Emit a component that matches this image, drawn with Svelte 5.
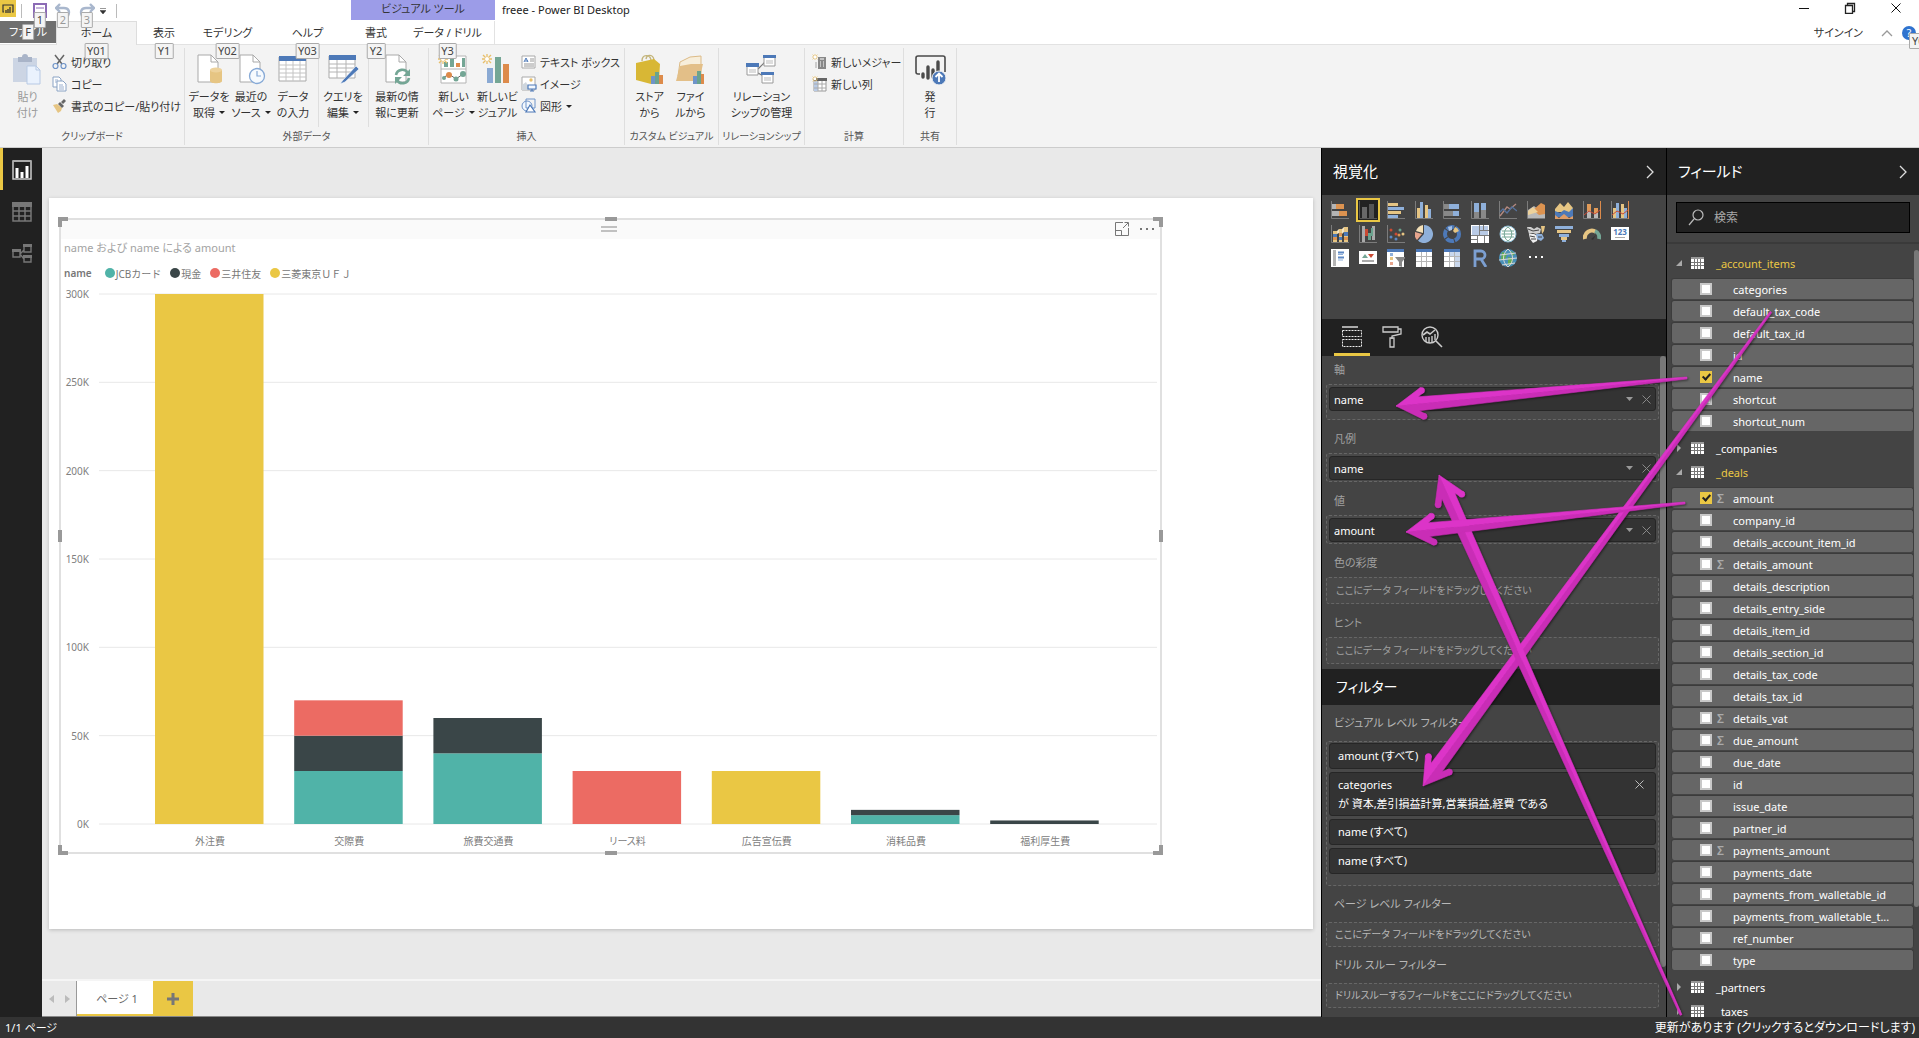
<script lang="ts">
  interface Segment {
    series: string;
    value: number;
  }

  interface Field {
    name: string;
    checked?: boolean;
    sum?: boolean;
  }

  const COLORS: Record<string, string> = {
    JCBカード: '#50b3a8',
    現金: '#3a4648',
    三井住友: '#ec6b63',
    三菱東京ＵＦＪ: '#eac744'
  };

  // Ribbon tabs and their key tips
  const tabs = [
    { label: 'ホーム', tip: 'Y01', active: true },
    { label: '表示', tip: 'Y1' },
    { label: 'モデリング', tip: 'Y02' },
    { label: 'ヘルプ', tip: 'Y03' },
    { label: '書式', tip: 'Y2', context: true },
    { label: 'データ / ドリル', tip: 'Y3', context: true }
  ];

  const doc = '<path d="M4 1h13l7 7v20H4z" fill="#fff" stroke="#a9a9a9"/><path d="M17 1v7h7" fill="none" stroke="#a9a9a9"/>';
  const spark = '<path d="M5 0v10M0 5h10M1 1l8 8M9 1l-8 8" stroke="#e8bf6a" stroke-width="1.3"/><circle cx="5" cy="5" r="2" fill="#fff"/>';

  const big: Record<string, string> = {
    paste: '<path d="M1 4h24v24H1z" fill="#ccd5e4"/><path d="M6 3h4a3 3 0 0 1 6 0h4v5H6z" fill="#a9b4c8"/><path d="M15 12h9l4 4v14H15z" fill="#eaf2fd" stroke="#b7c9e4"/><path d="M24 12v4h4" fill="none" stroke="#b7c9e4"/>',
    getData: doc + '<path d="M16 16v11c0 3 12 3 12 0V16" fill="#e6c583"/><ellipse cx="22" cy="16" rx="6" ry="2.5" fill="#edd29c"/>',
    recent: doc + '<circle cx="21" cy="22" r="7.5" fill="#f6fafe" stroke="#86a9d6" stroke-width="1.3"/><path d="M21 17v5h4" fill="none" stroke="#86a9d6" stroke-width="1.2"/>',
    enter: '<path d="M1 3h27v24H1z" fill="#fff" stroke="#a9a9a9"/><path d="M1 2h27v5H1z" fill="#4d79b8"/><path d="M1 11h27M1 15h27M1 19h27M1 23h27M8 7v20M15 7v20M22 7v20" stroke="#c4c4c4"/>',
    query: '<path d="M1 2h26v22H1z" fill="#fff" stroke="#a9a9a9"/><path d="M1 1h27v5H1z" fill="#4d79b8"/><path d="M1 10h26M1 14h26M1 18h26M9 6v18M18 6v18" stroke="#b4b4b4"/><path d="M15 26 28 12l3 3L17 28l-5 2z" fill="#4d79b8" stroke="#fff" stroke-width=".6"/>',
    refresh: doc + '<path d="M14 21a6.500 6.500 0 0 1 12-2M27 24a6.500 6.500 0 0 1-12 2" fill="none" stroke="#74a695" stroke-width="2.600"/><path d="M28 15v7h-7zM13 30v-7h7z" fill="#74a695"/>',
    newPage: '<path d="M3 2h25v27H3zM3 15h25" fill="#fff" stroke="#b4b4b4"/><path d="M6 8h4v5H6zM12 5h4v8h-4zM24 4h3v9h-3z" fill="#74a695"/><path d="M18 9h4v4h-4z" fill="#dd8b4b"/><path d="M5 24l6-4 7 5 7-5" fill="none" stroke="#666"/><circle cx="11" cy="21" r="3" fill="#dd8b4b"/><circle cx="18" cy="25" r="2.500" fill="#74a695"/><circle cx="25" cy="20" r="3" fill="#74a695"/><circle cx="6" cy="24" r="2" fill="#74a695"/>' + spark,
    newVisual: '<path d="M5 14h6v15H5z" fill="#8aa9d3"/><path d="M13 3h6v26h-6z" fill="#74a695"/><path d="M21 10h6v19h-6z" fill="#dd8b4b"/>' + spark,
    store: '<path d="M8 7c0-7 8-7 9-1M12 5c1-5 7-5 8 1" fill="none" stroke="#c3b47a" stroke-width="1.400"/><path d="M2 9 20 5l6 5-1 17-8 3L2 26z" fill="#d8b735"/><path d="M17 22h4v8h-4z" fill="#6f94c9"/><path d="M21 18h4v12h-4z" fill="#6aa38e"/><path d="M25 21h4v9h-4z" fill="#dd8b4b"/>',
    file: '<path d="M5 8l10-5 11-1v20H3z" fill="#f7eedb" stroke="#dcbb87"/><path d="M1 27l4-15 11-2h12l-4 17z" fill="#e3bf88"/><path d="M18 22h4v8h-4z" fill="#6f94c9"/><path d="M22 17h4v13h-4z" fill="#6aa38e"/><path d="M26 20h3v10h-3z" fill="#dd8b4b"/>',
    relation: '<path d="M12 15 19 8M12 19l7 4" stroke="#777" stroke-width="1.200"/><path d="M1 11h11v10H1zM18 2h11v10H18zM16 19h11v10H16z" fill="#fff" stroke="#999"/><path d="M0 9h13v4H0zM17 1h13v3H17zM15 18h13v3H15z" fill="#4d79b8"/><path d="M3 16h7M3 18h7M20 7h7M20 9h7M18 24h7M18 26h7" stroke="#bbb"/>',
    publish: '<path d="M5 20H3a2 2 0 0 1-2-2V4a2 2 0 0 1 2-2h25a2 2 0 0 1 2 2v14" fill="none" stroke="#4a4a4a" stroke-width="1.600"/><path d="M8 20v3M13 13v11M18 16v7M23 8v10" stroke="#4a4a4a" stroke-width="3.400" stroke-linecap="round"/><circle cx="24" cy="24" r="7" fill="#4d79b8" stroke="#f3f3f3"/><path d="M24 28v-8M20.500 23l3.500-3.500 3.500 3.500" fill="none" stroke="#fff" stroke-width="1.800"/>'
  };

  const small: Record<string, string> = {
    cut: '<path d="M3 1l7 9M12 1L5 10" stroke="#666" stroke-width="1.500"/><circle cx="3.500" cy="12" r="2.500" fill="none" stroke="#6f94c9" stroke-width="1.200"/><circle cx="11.500" cy="12" r="2.500" fill="none" stroke="#6f94c9" stroke-width="1.200"/>',
    copy: '<path d="M1 1h6l2 2v8H1z" fill="#fff" stroke="#8aa3c4"/><path d="M5 5h6l3 3v7H5z" fill="#fff" stroke="#8aa3c4"/><path d="M3 4h3M3 6h2M7 9h4M7 11h5M7 13h5" stroke="#9bb0cf"/>',
    brush: '<path d="M1 7l4-1 5 4-1 3-3 2z" fill="#e6c583"/><path d="M6 6l4 4 2-2-4-4zM9 4l3-3 2 2-3 3z" fill="#666"/>',
    textBox: '<path d="M1 2h13v12H1z" fill="#fff" stroke="#a9a9a9"/><path d="M3 8l2-4 2 4M4 7h3" fill="none" stroke="#4d79b8"/><path d="M9 5h4M9 7h4M3 10h10M3 12h10" stroke="#999"/>',
    image: '<path d="M1 1h13v13H1z" fill="#fff" stroke="#a9a9a9"/><path d="M1 14V9l4-3 4 8z" fill="#cfd6dd"/><circle cx="10" cy="4" r="1.700" fill="#e8bf6a"/><path d="M7 9h8v4H7zM11 13v2M9 15h4" fill="#f3f8fe" stroke="#4d79b8" stroke-width="1.200"/>',
    shapes: '<circle cx="6" cy="8" r="5" fill="#f3f8fe" stroke="#6f94c9"/><path d="M5 1h9v9H5z" fill="none" stroke="#6f94c9"/><path d="M9 7l5 7H5z" fill="#fff" stroke="#4d79b8" stroke-width="1.200"/>',
    measure: '<path d="M6 3h8v12H6z" fill="#888"/><path d="M8 5h4M8 8h1M11 8h1M8 10h1M11 10h1M8 12h1M11 12h1" stroke="#fff"/><path d="M3 8h2v6H3z" fill="#ccc"/><g transform="scale(.6)">' + spark + '</g>',
    column: '<path d="M2 3h12v12H2z" fill="#fff" stroke="#999"/><path d="M2 2h13v3H2z" fill="#666"/><path d="M2 5h4v10H2z" fill="#b9cbe6"/><path d="M6 5v10M10 5v10M2 8h12M2 12h12" stroke="#aaa"/><g transform="scale(.6)">' + spark + '</g>'
  };

  const axis = '<path d="M.5 0v17.500H18" fill="none" stroke="#7c7c7c"/>';
  const grid = '<path d="M1 1h16v17H1z" fill="#fff"/><path d="M1 0h16v3H1z" fill="#4d79b8"/><path d="M1 7.500h16M1 12.500h16M6.500 3v15M11.500 3v15" stroke="#b5b5b5"/>';

  const visuals = [
    { label: '積み上げ横棒グラフ', svg: axis + '<path d="M1 3h4v5H1zM1 10h7v5H1z" fill="#b4b4b4"/><path d="M5 3h8v5H5zM8 10h8v5H8z" fill="#dd9350"/>' },
    { label: '積み上げ縦棒グラフ', svg: '<path d="M.5 0v17.500H18" fill="none" stroke="#555"/><path d="M3 6h5v11H3z" fill="#686868"/><path d="M10 3h5v14h-5z" fill="#555"/>', active: true },
    { label: '集合横棒グラフ', svg: axis + '<path d="M1 2h10v3H1zM1 10h13v3H1z" fill="#e6c583"/><path d="M1 6h16v3H1zM1 14h10v3H1z" fill="#8fb0da"/>' },
    { label: '集合縦棒グラフ', svg: axis + '<path d="M2 7h3v10H2zM10 4h3v13h-3z" fill="#e6c583"/><path d="M5 1h3v16H5zM13 8h3v9h-3z" fill="#8fb0da"/>' },
    { label: '100% 積み上げ横棒グラフ', svg: axis + '<path d="M1 3h5v5H1zM1 10h9v5H1z" fill="#888"/><path d="M6 3h10v5H6zM10 10h6v5h-6z" fill="#8fb0da"/>' },
    { label: '100% 積み上げ縦棒グラフ', svg: axis + '<path d="M3 2h5v9H3zM10 2h5v7h-5z" fill="#8fb0da"/><path d="M3 11h5v6H3zM10 9h5v8h-5z" fill="#888"/>' },
    { label: '折れ線グラフ', svg: axis + '<path d="M1 15l7-9 3 2 6-5" fill="none" stroke="#b58a80" stroke-width="1.300"/><path d="M1 11l3-3 4 4 5-6 5 4" fill="none" stroke="#55719c" stroke-width="1.300"/>' },
    { label: '面グラフ', svg: axis + '<path d="M1 17V9l6-4 5 4 6-3v11z" fill="#b9b9b9"/><path d="M6 9l8-7 4 2v9l-6 1z" fill="#dd9350"/><path d="M1 10l5-4 5 5-10 3z" fill="#edd29c"/>' },
    { label: '積み上げ面グラフ', svg: '<path d="M0 8l5-6 4 4 4-5 5 6v4H0z" fill="#e6c583"/><path d="M0 10l5 2 4-3 5 2 4-4v9H0z" fill="#4d79b8"/><path d="M0 14l4 3 5-4 5 4 4-2v3H0z" fill="#dd9c68"/>' },
    { label: '折れ線および積み上げ縦棒グラフ', svg: axis + '<path d="M4 3h4v14H4zM11 7h4v10h-4z" fill="#e09a58"/><path d="M4 10h4v7H4zM11 12h4v5h-4z" fill="#bbb"/><path d="M1 14l5-4 6 3 5-4" fill="none" stroke="#cb4a33"/><path d="M17.500 0v18" stroke="#dd8b4b"/>' },
    { label: '折れ線および集合縦棒グラフ', svg: axis + '<path d="M2 7h3v10H2zM10 3h3v14h-3z" fill="#e6c583"/><path d="M5 2h3v15H5zM13 7h3v10h-3z" fill="#8fb0da"/><path d="M1 14l5-4 6 3 5-4" fill="none" stroke="#cb4a33"/><path d="M17.500 0v18" stroke="#dd8b4b"/>' },
    { label: 'リボン グラフ', svg: axis + '<path d="M2 6h4v11H2zM8 4h3v13H8zM13 2h4v15h-4z" fill="#e6c583"/><path d="M2 9h4v3H2zM8 12h3v3H8zM13 7h4v4h-4z" fill="#4d79b8"/><path d="M2 12h4v3H2zM8 8h3v3H8zM13 12h4v3h-4z" fill="#dd9350"/><path d="M6 6l2-2v4L6 9zM11 4l2-2v5l-2 2z" fill="#f3e3c2"/>' },
    { label: 'ウォーターフォール図', svg: axis + '<path d="M3 1h3v16H3zM13 1h3v14h-3z" fill="#aaa"/><path d="M6 4h3v7H6z" fill="#cb4a33"/><path d="M9 8h3v7H9zM12 3h2v8h-2z" fill="#6aa38e"/>' },
    { label: '散布図', svg: axis + '<g fill="#cb4a33"><circle cx="4" cy="5" r="1.500"/><circle cx="9" cy="9" r="1.500"/></g><g fill="#5d88c4"><circle cx="4" cy="12" r="1.500"/><circle cx="9" cy="14" r="1.500"/></g><circle cx="13" cy="5" r="1.500" fill="#6aa38e"/><circle cx="16" cy="9" r="1.500" fill="#e6c583"/><circle cx="12" cy="10" r="1.500" fill="#dd9350"/>' },
    { label: '円グラフ', svg: '<path d="M9 9V0a9 9 0 1 1-6 15.700z" fill="#8fb0da"/><path d="M8 8V0A9 9 0 0 0 1 6z" fill="#f3e0b8"/><path d="M7 9L0 7c-1 3 0 6 2 8z" fill="#e7a58d"/>' },
    { label: 'ドーナツ グラフ', svg: '<circle cx="9" cy="9" r="7" fill="none" stroke="#4d79b8" stroke-width="4" stroke-dasharray="8 1"/><path d="M12 2a8 8 0 0 1 4 4l-4 2-2-2z" fill="#e6c583"/><path d="M5 2l4-1v4L6 6z" fill="#a5c0e4"/>' },
    { label: 'ツリーマップ', svg: '<path d="M0 0h18v18H0z" fill="#fff"/><path d="M1 1h7v9H1zM9 1h3v4H9zM13 1h4v4h-4zM9 6h8v5H9z" fill="#b9cbe6"/><path d="M0 10.500h18M8.500 0v10M12.500 0v5M8.500 5.500H18M6.500 11v7M13.500 11v7M0 14.500h6" stroke="#7d7d7d"/>' },
    { label: 'マップ', svg: '<circle cx="9" cy="9" r="8" fill="#fff" stroke="#8bbad0"/><path d="M9 2c-5 3-5 11 0 14M9 2c5 3 5 11 0 14M3 6h12M2.500 9h13M3 12h12" fill="none" stroke="#74a695"/>' },
    { label: '塗り分け地図', svg: '<path d="M0 2l4 0 3 2 3-2 4 2-1 4-4 1-3-1-4 1z" fill="#d0d0d0"/><path d="M2 9l5 0 4 2-1 5-4 2-3-4z" fill="#eee"/><path d="M14 1l4 0-1 5-2 3z" fill="#e6c583"/><path d="M9 9l6 0 2 4-3 3-4-2z" fill="#8fb0da"/><path d="M1 4l5 2 6-1M3 11l5 1M11 12l4 0M4 14l5 0" fill="none" stroke="#444"/>' },
    { label: 'じょうごグラフ', svg: '<path d="M0 1h18v3H0zM4 9h10v3H4zM7 15h4v2H7z" fill="#8fb0da"/><path d="M2 5h14v3H2zM6 12h6v3H6z" fill="#e6c583"/>' },
    { label: 'ゲージ', svg: '<path d="M2 14a7 7 0 0 1 11-7" fill="none" stroke="#e6c583" stroke-width="4"/><path d="M12 6a7 7 0 0 1 4 8" fill="none" stroke="#74a695" stroke-width="4"/><path d="M8 14l5-4-3 5z" fill="#333"/>' },
    { label: 'カード', svg: '<path d="M0 2h18v13H0z" fill="#fff"/><text x="9" y="10" font-size="8" font-weight="700" text-anchor="middle" fill="#4d79b8" font-family="Noto Sans">123</text><path d="M4 12.500h10" stroke="#aaa"/>' },
    { label: '複数の行カード', svg: '<path d="M0 0h18v18H0z" fill="#fff"/><path d="M2 1h3v16H2z" fill="#b4b4b4"/><path d="M7 3.500h6M7 8.500h6" stroke="#5d88c4" stroke-width="2"/><path d="M7 5.500h5M7 11h5" stroke="#8fb0da"/>' },
    { label: 'KPI', svg: '<path d="M0 2h18v13H0z" fill="#fff"/><path d="M3 9l3-4 3 4z" fill="#74a695"/><path d="M9 5h6l-3 4z" fill="#cb4a33"/><path d="M3 12h12" stroke="#aaa" stroke-width="2"/>' },
    { label: 'スライサー', svg: '<path d="M0 1h17v17H0z" fill="#fff"/><path d="M0 0h17v3H0z" fill="#4d79b8"/><path d="M3 4h3v3H3z" fill="#8fb0da"/><path d="M3 8h3v3H3z" fill="#e6c583"/><path d="M3 13h3v3H3z" fill="#e7a58d"/><path d="M8 8h11l-4 5v5l-3-1v-4z" fill="#888"/>' },
    { label: 'テーブル', svg: grid },
    { label: 'マトリックス', svg: grid + '<path d="M7 3h4v4H7zM12 3h5v4h-5zM12 8h5v4h-5zM12 13h5v5h-5z" fill="#c9d7ec"/>' },
    { label: 'R スクリプト ビジュアル', svg: '<path d="M4 18V2h6a4 4 0 0 1 0 8H4M10 10l5 8" fill="none" stroke="#7c9fd1" stroke-width="2.800"/>' },
    { label: 'ArcGIS Maps', svg: '<circle cx="9" cy="9" r="9" fill="#4a90b8"/><path d="M3 3l5 2-2 5-4 1zM9 8l5 1-1 6-4 1zM12 2l4 3-3 2z" fill="#63ad52"/><path d="M9 0c-6 5-6 13 0 18M9 0c6 5 6 13 0 18M1 6l16-2M0 11l18-2M3 16l13-2" fill="none" stroke="#d8d8d8"/>' },
  ];

  const data: { name: string; parts: Segment[] }[] = [
    { name: '外注費', parts: [{ series: '三菱東京ＵＦＪ', value: 300 }] },
    { name: '交際費', parts: [{ series: 'JCBカード', value: 30 }, { series: '現金', value: 20 }, { series: '三井住友', value: 20 }] },
    { name: '旅費交通費', parts: [{ series: 'JCBカード', value: 40 }, { series: '現金', value: 20 }] },
    { name: 'リース料', parts: [{ series: '三井住友', value: 30 }] },
    { name: '広告宣伝費', parts: [{ series: '三菱東京ＵＦＪ', value: 30 }] },
    { name: '消耗品費', parts: [{ series: 'JCBカード', value: 5 }, { series: '現金', value: 3 }] },
    { name: '福利厚生費', parts: [{ series: '現金', value: 2 }] }
  ];

  const BASE = 542;
  const UNIT = 530 / 300;
  const ticks = [300, 250, 200, 150, 100, 50, 0];

  const bars = data.map((d, i) => {
    let sum = 0;
    const x = 94 + i * 139.2;
    return {
      name: d.name,
      x,
      rects: d.parts.map((p) => {
        sum += p.value;
        return { y: BASE - sum * UNIT, h: p.value * UNIT, fill: COLORS[p.series] };
      })
    };
  });

  const wells = [
    { label: '軸', field: 'name' },
    { label: '凡例', field: 'name' },
    { label: '値', field: 'amount' },
    { label: '色の彩度' },
    { label: 'ヒント' }
  ];

  const accountItems: Field[] = [
    { name: 'categories' },
    { name: 'default_tax_code' },
    { name: 'default_tax_id' },
    { name: 'id' },
    { name: 'name', checked: true },
    { name: 'shortcut' },
    { name: 'shortcut_num' }
  ];

  const deals: Field[] = [
    { name: 'amount', checked: true, sum: true },
    { name: 'company_id' },
    { name: 'details_account_item_id' },
    { name: 'details_amount', sum: true },
    { name: 'details_description' },
    { name: 'details_entry_side' },
    { name: 'details_item_id' },
    { name: 'details_section_id' },
    { name: 'details_tax_code' },
    { name: 'details_tax_id' },
    { name: 'details_vat', sum: true },
    { name: 'due_amount', sum: true },
    { name: 'due_date' },
    { name: 'id' },
    { name: 'issue_date' },
    { name: 'partner_id' },
    { name: 'payments_amount', sum: true },
    { name: 'payments_date' },
    { name: 'payments_from_walletable_id' },
    { name: 'payments_from_walletable_t...' },
    { name: 'ref_number' },
    { name: 'type' }
  ];

  let tables = $state([
    { name: '_account_items', open: true, fields: accountItems },
    { name: '_companies', open: false, fields: [] as Field[] },
    { name: '_deals', open: true, fields: deals },
    { name: '_partners', open: false, fields: [] as Field[] },
    { name: '_taxes', open: false, fields: [] as Field[] }
  ]);

  // Tapered arrow from tail to tip, lit on one side and shaded on the other
  function arrow(tx: number, ty: number, ex: number, ey: number) {
    const len = Math.hypot(ex - tx, ey - ty);
    const ux = (ex - tx) / len;
    const uy = (ey - ty) / len;
    const at = (a: number, b: number) => [tx + ux * a - uy * b, ty + uy * a + ux * b];
    const half = (s: number) => [at(0, 0), at(26, 16 * s), at(29, 11 * s), at(23, 7 * s), at(len, s), at(len, 0)];
    const poly = (pts: number[][]) => pts.map((p) => p.map((n) => Math.round(n * 10) / 10).join(',')).join(' ');
    return {
      light: poly(half(-1)),
      dark: poly(half(1)),
      lightEnd: at(27, -13),
      darkEnd: at(27, 13)
    };
  }

  const arrows = [
    arrow(75, 258, 366, 230),
    arrow(102, 638, 450, 164),
    arrow(118, 327, 360, 867),
    arrow(85, 384, 364, 355)
  ];
</script>

{#snippet bigButton(icon: string, first: string, second: string, menu = false, dim = false)}
  <button class="big" class:dim>
    <svg width="31" height="31" viewBox="0 0 31 31">{@html big[icon]}</svg>
    <span>{first}</span>
    <span>{second}{#if menu}<i class="caret"></i>{/if}</span>
  </button>
{/snippet}

{#snippet smallButton(icon: string, label: string, menu = false)}
  <button class="small">
    <svg width="16" height="16" viewBox="0 0 16 16">{@html small[icon]}</svg>
    <span>{label}{#if menu}<i class="caret"></i>{/if}</span>
  </button>
{/snippet}

{#snippet cross()}
  <svg width="9" height="9" viewBox="0 0 9 9"><path d="M.5.5l8 8M8.500.5l-8 8" stroke="currentColor" fill="none" /></svg>
{/snippet}

{#snippet chevron()}
  <svg width="8" height="14" viewBox="0 0 8 14"><path d="M1 1l6 6-6 6" stroke="#ddd" stroke-width="1.300" fill="none" /></svg>
{/snippet}

<div class="app">
  <header class="title-bar">
    <svg class="logo" width="16" height="17" viewBox="0 0 16 17">
      <path d="M0 0h16v17H0z" fill="#eac744" />
      <path d="M4 12H3V5h10v7h-1" fill="none" stroke="#333" stroke-width="1.200" />
      <path d="M6 13v-3M8 13V9M10 13V7" stroke="#333" stroke-width="1.300" />
    </svg>
    <i class="bar"></i>
    <div class="quick">
      <button aria-label="保存">
        <svg width="14" height="15" viewBox="0 0 14 15"><path d="M1 1h12v13H1z" fill="#fff" stroke="#8c6bb5" stroke-width="2" /><path d="M3 5h8" stroke="#8c6bb5" /></svg>
        <span class="tip">1</span>
      </button>
      <button class="faded" aria-label="元に戻す">
        <svg width="16" height="15" viewBox="0 0 16 15"><path d="M5 1L1 5l4 4M1 5h8c5 0 6 4 4 8" fill="none" stroke="#a9b7cd" stroke-width="2.400" /></svg>
        <span class="tip">2</span>
      </button>
      <button class="faded" aria-label="やり直し">
        <svg width="16" height="15" viewBox="0 0 16 15"><path d="M11 1l4 4-4 4M15 5H7C2 5 1 9 3 13" fill="none" stroke="#a9b7cd" stroke-width="2.400" /></svg>
        <span class="tip">3</span>
      </button>
    </div>
    <svg width="6" height="6" viewBox="0 0 6 6"><path d="M0 .5h6M0 2.500h6L3 6z" stroke="#333" stroke-width=".5" fill="#333" /></svg>
    <i class="bar last"></i>
    <div class="context-title">ビジュアル ツール</div>
    <h1>freee - Power BI Desktop</h1>
    <div class="window-buttons">
      <button aria-label="最小化"><svg width="12" height="12" viewBox="0 0 12 12"><path d="M1 6.500h10" stroke="#111" /></svg></button>
      <button aria-label="元に戻す (縮小)"><svg width="12" height="12" viewBox="0 0 12 12"><path d="M1.500 3.500h7v8h-7zM3.500 3V1.500h7v8H9" fill="none" stroke="#222" stroke-width="1.300" /></svg></button>
      <button aria-label="閉じる"><svg width="12" height="12" viewBox="0 0 12 12"><path d="M1.500 1.500l9 9M10.500 1.500l-9 9" stroke="#111" /></svg></button>
    </div>
  </header>

  <nav class="tabs">
    <button class="file-tab">ファイル<span class="tip">F</span></button>
    {#each tabs as tab}
      <button class="tab" class:active={tab.active} class:context={tab.context}>
        {tab.label}<span class="tip">{tab.tip}</span>
      </button>
    {/each}
    <div class="account">
      <a href="#signin">サインイン</a>
      <svg width="12" height="7" viewBox="0 0 12 7"><path d="M1 6l5-5 5 5" fill="none" stroke="#999" stroke-width="1.300" /></svg>
      <button class="help" aria-label="ヘルプ">?<span class="tip">Y04</span></button>
    </div>
  </nav>

  <section class="ribbon">
    <div class="group">
      <div class="tools clipboard">
        {@render bigButton('paste', '貼り', '付け', false, true)}
        <div class="stack">
          {@render smallButton('cut', '切り取り')}
          {@render smallButton('copy', 'コピー')}
          {@render smallButton('brush', '書式のコピー/貼り付け')}
        </div>
      </div>
      <p>クリップボード</p>
    </div>
    <div class="group">
      <div class="tools external">
        {@render bigButton('getData', 'データを', '取得', true)}
        {@render bigButton('recent', '最近の', 'ソース', true)}
        {@render bigButton('enter', 'データ', 'の入力')}
        <i class="rule"></i>
        {@render bigButton('query', 'クエリを', '編集', true)}
        <i class="rule"></i>
        {@render bigButton('refresh', '最新の情', '報に更新')}
      </div>
      <p>外部データ</p>
    </div>
    <div class="group">
      <div class="tools insert">
        {@render bigButton('newPage', '新しい', 'ページ', true)}
        {@render bigButton('newVisual', '新しいビ', 'ジュアル')}
        <div class="stack">
          {@render smallButton('textBox', 'テキスト ボックス')}
          {@render smallButton('image', 'イメージ')}
          {@render smallButton('shapes', '図形', true)}
        </div>
      </div>
      <p>挿入</p>
    </div>
    <div class="group">
      <div class="tools pair">
        {@render bigButton('store', 'ストア', 'から')}
        {@render bigButton('file', 'ファイ', 'ルから')}
      </div>
      <p>カスタム ビジュアル</p>
    </div>
    <div class="group">
      <div class="tools single">{@render bigButton('relation', 'リレーション', 'シップの管理')}</div>
      <p>リレーションシップ</p>
    </div>
    <div class="group">
      <div class="tools calc">
        <div class="stack">
          {@render smallButton('measure', '新しいメジャー')}
          {@render smallButton('column', '新しい列')}
        </div>
      </div>
      <p>計算</p>
    </div>
    <div class="group">
      <div class="tools single">{@render bigButton('publish', '発', '行')}</div>
      <p>共有</p>
    </div>
  </section>

  <main>
    <nav class="rail">
      <button class="current" aria-label="レポート">
        <svg width="20" height="20" viewBox="0 0 20 20"><path d="M1 1h18v18H1z" fill="none" stroke="#ccc" stroke-width="1.500" /><path d="M1 1h18" stroke="#aaa" stroke-width="2" /><path d="M5 18V8M10 18v-6M15 18V6" stroke="#fff" stroke-width="3" /></svg>
      </button>
      <button aria-label="データ">
        <svg width="20" height="20" viewBox="0 0 20 20"><path d="M1 1h18v18H1zM1 9h18M1 14h18M7 5v14M13 5v14" fill="none" stroke="#777" stroke-width="1.500" /><path d="M0 0h20v5H0z" fill="#777" /></svg>
      </button>
      <button aria-label="リレーションシップ">
        <svg width="20" height="20" viewBox="0 0 20 20"><path d="M1 7h7v6H1zM12 2h7v6h-7zM12 12h7v6h-7zM8 10l4-4M8 10l4 5" fill="none" stroke="#777" stroke-width="1.400" /><path d="M0 5h9v3H0zM11 0h9v3h-9zM11 11h9v3h-9z" fill="#777" /></svg>
      </button>
    </nav>

    <section class="report">
      <div class="page">
        <article class="visual">
          <i class="handle corner nw"></i><i class="handle n"></i><i class="handle corner ne"></i>
          <i class="handle w"></i><i class="handle e"></i>
          <i class="handle corner sw"></i><i class="handle s"></i><i class="handle corner se"></i>
          <div class="visual-head">
            <svg class="grip" width="16" height="6" viewBox="0 0 16 6"><path d="M0 1h16M0 5h16" stroke="#888" /></svg>
            <button aria-label="フォーカス モード"><svg width="14" height="14" viewBox="0 0 14 14"><path d="M8 .5H.5v13h13V6M.5 8.500h6v5M8 6l5-5M9.500.5h4v4" fill="none" stroke="#777" /></svg></button>
            <button aria-label="その他のオプション"><svg width="16" height="4" viewBox="0 0 16 4"><path d="M1 1h2v2H1zM7 1h2v2H7zM13 1h2v2h-2z" fill="#777" /></svg></button>
          </div>
          <h2>name および name による amount</h2>
          <ul class="legend">
            <li><b>name</b></li>
            {#each Object.entries(COLORS) as [label, color]}
              <li><i style="background: {color}"></i>{label}</li>
            {/each}
          </ul>
          <svg class="chart" viewBox="0 0 1099 570">
            {#each ticks as t}
              <line x1="38" x2="1096" y1={BASE - t * UNIT} y2={BASE - t * UNIT} />
              <text x="28" y={BASE - t * UNIT + 4} text-anchor="end">{t}K</text>
            {/each}
            {#each bars as bar}
              {#each bar.rects as r}
                <rect x={bar.x} y={r.y} width="108.500" height={r.h} fill={r.fill} />
              {/each}
              <text x={bar.x + 55} y="563" text-anchor="middle">{bar.name}</text>
            {/each}
          </svg>
        </article>
      </div>
      <footer class="page-tabs">
        <div class="pager">
          <button aria-label="前のページ"><svg width="5" height="8" viewBox="0 0 5 8"><path d="M5 0v8L0 4z" fill="#bbb" /></svg></button>
          <button aria-label="次のページ"><svg width="5" height="8" viewBox="0 0 5 8"><path d="M0 0v8l5-4z" fill="#bbb" /></svg></button>
        </div>
        <button class="page-tab">ページ 1</button>
        <button class="add" aria-label="新しいページ"><svg width="12" height="12" viewBox="0 0 12 12"><path d="M6 0v12M0 6h12" stroke="#777" stroke-width="3" /></svg></button>
      </footer>
    </section>

    <aside class="panel visualizations">
      <div class="panel-head"><h2>視覚化</h2>{@render chevron()}</div>
      <div class="gallery">
        {#each visuals as v}
          <button class:active={v.active} aria-label={v.label}>
            <svg width="18" height="18" viewBox="0 0 18 18">{@html v.svg}</svg>
          </button>
        {/each}
        <button aria-label="その他"><svg width="18" height="18" viewBox="0 0 18 18"><path d="M2 7h2v2H2zM8 7h2v2H8zM14 7h2v2h-2z" fill="#fff" /></svg></button>
      </div>
      <div class="modes">
        <button class="on" aria-label="フィールド">
          <svg width="20" height="22" viewBox="0 0 20 22"><path d="M0 1h16" stroke="#aaa" stroke-width="2" /><path d="M.5 4.500h19v6H.5zM.5 13.500h19v7H.5z" fill="none" stroke="#eee" stroke-dasharray="2 1" /></svg>
        </button>
        <button aria-label="書式">
          <svg width="20" height="22" viewBox="0 0 20 22"><path d="M1 1h15v5H1zM16 3h3v5l-9 2v3M8 12h4v9H8z" fill="none" stroke="#ccc" stroke-width="1.300" /></svg>
        </button>
        <button aria-label="分析">
          <svg width="22" height="22" viewBox="0 0 22 22"><circle cx="9" cy="9" r="8" fill="none" stroke="#ccc" stroke-width="1.400" /><path d="M2 9l4-3 3 2 5-4M15 15l6 6" fill="none" stroke="#ccc" stroke-width="1.600" /><path d="M5 16v-5M8 17v-6M11 16v-6M14 14V8" stroke="#ccc" stroke-width="1.400" /></svg>
        </button>
      </div>
      <div class="build">
        {#each wells as well, i}
          <div class="well">
            <h3>{well.label}</h3>
            {#if well.field}
              <div class="drop" class:tall={i === 0}>
                <div class="chip">
                  <span>{well.field}</span>
                  <button aria-label="メニュー"><svg width="7" height="4" viewBox="0 0 7 4"><path d="M0 0h7L3.500 4z" fill="#999" /></svg></button>
                  <button aria-label="削除">{@render cross()}</button>
                </div>
              </div>
            {:else}
              <div class="drop empty">ここにデータ フィールドをドラッグしてください</div>
            {/if}
          </div>
        {/each}
        <h2 class="filter-head">フィルター</h2>
        <div class="filters">
          <h3>ビジュアル レベル フィルター</h3>
          <div class="drop list">
            <div class="filter">amount (すべて)</div>
            <div class="filter applied">
              <div>categories<button aria-label="フィルターの削除">{@render cross()}</button></div>
              <div>が 資本,差引損益計算,営業損益,経費 である</div>
            </div>
            <div class="filter">name (すべて)</div>
            <div class="filter">name (すべて)</div>
          </div>
          <h3>ページ レベル フィルター</h3>
          <div class="drop hint">ここにデータ フィールドをドラッグしてください</div>
          <h3>ドリル スルー フィルター</h3>
          <div class="drop hint">ドリルスルーするフィールドをここにドラッグしてください</div>
        </div>
        <i class="scroll"></i>
      </div>
    </aside>

    <aside class="panel fields">
      <div class="panel-head"><h2>フィールド</h2>{@render chevron()}</div>
      <label class="search">
        <svg width="17" height="17" viewBox="0 0 17 17"><circle cx="10" cy="6" r="5" fill="none" stroke="#bbb" stroke-width="1.200" /><path d="M6 10l-5 6" stroke="#bbb" stroke-width="1.200" /></svg>
        <input type="text" placeholder="検索" aria-label="検索" />
      </label>
      <div class="tree">
        {#each tables as table}
          <button class="table-name" class:open={table.open}>
            {#if table.open}
              <svg width="6" height="6" viewBox="0 0 6 6"><path d="M6 0v6H0z" fill="#aaa" /></svg>
            {:else}
              <svg width="6" height="8" viewBox="0 0 6 8"><path d="M1 0l4 4-4 4z" fill="#aaa" /></svg>
            {/if}
            <svg width="13" height="12" viewBox="0 0 13 12"><path d="M0 0h13v12H0z" fill="#fff" /><path d="M0 0h13v2H0z" fill="#999" /><path d="M0 5.500h13M0 8.500h13M3.500 2v10M6.500 2v10M9.500 2v10" stroke="#777" /></svg>
            <span>{table.name}</span>
          </button>
          {#if table.open}
            <div class="field-list">
              {#each table.fields as field}
                <label class="field">
                  <input type="checkbox" bind:checked={field.checked} />
                  <span class="sigma">{field.sum ? 'Σ' : ''}</span>
                  <span>{field.name}</span>
                </label>
              {/each}
            </div>
          {/if}
        {/each}
        <i class="scroll"></i>
      </div>
    </aside>

    <svg class="arrows" width="598" height="870" viewBox="0 0 598 870">
      {#each arrows as a}
        <g>
          <g fill="#c92db6" stroke="#c92db6" stroke-width=".6">
            <polygon points={a.dark} />
            <circle cx={a.darkEnd[0]} cy={a.darkEnd[1]} r="3" />
          </g>
          <g fill="#dc34c8" stroke="#dc34c8" stroke-width=".6">
            <polygon points={a.light} />
            <circle cx={a.lightEnd[0]} cy={a.lightEnd[1]} r="3" />
          </g>
        </g>
      {/each}
    </svg>
  </main>

  <footer class="status">
    <span>1/1 ページ</span>
    <a href="#update">更新があります (クリックするとダウンロードします)</a>
  </footer>
</div>

<style>
  :global(body) {
    margin: 0;
    overflow: hidden;
  }

  .app {
    display: flex;
    flex-direction: column;
    height: 100vh;
    font-family: "Noto Sans", "Noto Sans CJK JP", sans-serif;
    font-feature-settings: "palt";
    font-size: 11px;
    color: #333;
    background: #fff;
  }

  button {
    margin: 0;
    padding: 0;
    border: none;
    background: none;
    color: inherit;
    font: inherit;
    font-feature-settings: inherit;
  }

  svg {
    display: block;
    flex: none;
  }

  h1,
  h2,
  h3,
  p,
  ul {
    margin: 0;
    padding: 0;
    font-weight: 400;
  }

  a {
    color: inherit;
    text-decoration: none;
  }

  /* title bar */
  .title-bar {
    display: flex;
    align-items: center;
    height: 21px;
    flex: none;
  }

  .logo {
    align-self: flex-start;
  }

  .bar {
    width: 1px;
    height: 14px;
    margin: 0 11px 0 5px;
    background: #bbb;
  }

  .bar.last {
    margin-left: 10px;
  }

  .quick {
    display: flex;
    gap: 8px;
    margin-right: 5px;
  }

  .quick button {
    position: relative;
  }

  .quick .tip {
    top: 9px;
  }

  .faded .tip {
    color: #999;
  }

  .tip {
    position: absolute;
    top: 22px;
    left: 50%;
    transform: translateX(-50%);
    z-index: 2;
    padding: 0 2px;
    border: 1px solid #aaa;
    border-radius: 1px;
    background: #f4f4f4;
    color: #444;
    font-size: 11px;
    line-height: 14px;
  }

  .context-title {
    width: 144px;
    height: 20px;
    margin-left: 223px;
    align-self: flex-start;
    background: #9c9ce8;
    color: #333;
    line-height: 18px;
    text-align: center;
  }

  h1 {
    margin-left: 7px;
    padding-bottom: 2px;
    color: #222;
    font-size: 11px;
  }

  .window-buttons {
    display: flex;
    gap: 34px;
    margin-left: auto;
    padding-right: 17px;
    align-self: flex-start;
    padding-top: 2px;
  }

  /* tabs */
  .tabs {
    display: grid;
    grid-template-columns: 56px 81px 54px 73px 87px 50px 94px 1fr;
    height: 24px;
    flex: none;
    border-bottom: 1px solid #e2e2e2;
    box-sizing: border-box;
  }

  .tab,
  .file-tab {
    position: relative;
    line-height: 24px;
  }

  .file-tab {
    height: 22px;
    background: #6f6f6f;
    color: #fff;
    line-height: 22px;
  }

  .file-tab .tip {
    top: 3px;
  }

  .tab.active {
    height: 24px;
    background: #f3f3f3;
    box-shadow: inset 1px 1px #ddd, inset -1px 0 #ddd;
  }

  .tab.context + .tab.context {
    border-right: 1px solid #e2e2e2;
  }

  .account {
    display: flex;
    align-items: center;
    justify-content: flex-end;
    gap: 18px;
    padding-right: 3px;
  }

  .account a {
    padding-bottom: 3px;
  }

  .account svg {
    margin-right: -9px;
  }

  .help {
    position: relative;
    width: 14px;
    height: 14px;
    border-radius: 50%;
    background: #2f73cf;
    color: #fff;
    line-height: 14px;
  }

  .help .tip {
    top: 7px;
    left: 7px;
    transform: none;
  }

  /* ribbon */
  .ribbon {
    display: grid;
    grid-template-columns: 185px 244px 196px 94px 86px 99px 53px;
    height: 102px;
    flex: none;
    background: #f3f3f3;
    border-bottom: 1px solid #ccc;
    box-sizing: content-box;
  }

  .group {
    display: flex;
    flex-direction: column;
    margin: 3px 0;
    padding-top: 3px;
    border-right: 1px solid #dedede;
    white-space: nowrap;
  }

  .group p {
    color: #555;
    line-height: 18px;
    text-align: center;
    font-size: 10px;
  }

  .tools {
    display: grid;
    height: 76px;
  }

  .clipboard {
    grid-template-columns: 47px 1fr;
    padding-left: 4px;
  }

  .external {
    grid-template-columns: 42px 42px 42px 8px 42px 8px 50px;
    padding-left: 3px;
  }

  .insert {
    grid-template-columns: 43px 43px 1fr;
    padding-left: 3px;
    column-gap: 1px;
  }

  .pair {
    grid-template-columns: 41px 41px;
    padding-left: 4px;
  }

  .single {
    grid-template-columns: 1fr;
  }

  .calc {
    padding-left: 6px;
  }

  .rule {
    width: 1px;
    margin: 0 auto;
    background: #dedede;
  }

  .big {
    display: flex;
    flex-direction: column;
    align-items: center;
    padding-top: 3px;
    line-height: 16px;
  }

  .big svg {
    margin-bottom: 4px;
  }

  .dim {
    color: #999;
  }

  .stack {
    display: flex;
    flex-direction: column;
  }

  .small {
    display: flex;
    align-items: center;
    gap: 3px;
    height: 22px;
    padding-left: 1px;
  }

  .caret {
    display: inline-block;
    margin-left: 4px;
    border: 3px solid transparent;
    border-top: 3px solid #222;
    border-bottom: none;
    vertical-align: 3px;
  }

  /* body */
  main {
    position: relative;
    display: grid;
    grid-template-columns: 42px 1fr 345px 253px;
    grid-template-rows: minmax(0, 1fr);
    flex: 1;
    min-height: 0;
    overflow: hidden;
  }

  .rail {
    background: #212121;
  }

  .rail button {
    display: flex;
    align-items: center;
    justify-content: center;
    width: 100%;
    height: 42px;
    padding: 2px 2px 0 0;
    border-left: 3px solid transparent;
    box-sizing: border-box;
  }

  .rail .current {
    border-color: #eac744;
  }

  .report {
    display: flex;
    flex-direction: column;
    min-width: 0;
    background: #e9e9e9;
  }

  .page {
    position: relative;
    flex: 1;
    margin: 50px 8px 51px 7px;
    background: #fff;
    box-shadow: 0 1px 4px rgba(0, 0, 0, 0.2);
  }

  .visual {
    position: absolute;
    top: 20px;
    left: 10px;
    width: 1099px;
    height: 632px;
    border: 2px solid #e0e0e0;
  }

  .visual-head {
    display: flex;
    align-items: center;
    gap: 10px;
    height: 17px;
    padding: 0 5px 2px 0;
    background: #fafafa;
  }

  .grip {
    margin: 0 auto;
    padding-left: 52px;
  }

  .visual h2 {
    padding-left: 3px;
    color: #a3a3a3;
    font-size: 11px;
    line-height: 17px;
  }

  .legend {
    display: flex;
    align-items: center;
    gap: 9px;
    height: 18px;
    margin-top: 8px;
    padding-left: 3px;
    color: #777;
    font-size: 10px;
    font-feature-settings: normal;
    list-style: none;
  }

  .legend li {
    display: flex;
    align-items: center;
    gap: 1px;
  }

  .legend b {
    margin-right: 4px;
    font-weight: 600;
  }

  .legend i {
    width: 10px;
    height: 10px;
    border-radius: 50%;
  }

  .chart {
    width: 100%;
    height: 570px;
  }

  .chart line {
    stroke: #e8e8e8;
  }

  .chart text {
    fill: #808080;
    font-size: 10px;
  }

  .handle {
    position: absolute;
    width: 12px;
    height: 4px;
    background: #999;
  }

  .n,
  .s {
    left: calc(50% - 6px);
  }

  .n {
    top: -3px;
  }

  .s {
    bottom: -3px;
  }

  .w,
  .e {
    top: calc(50% - 6px);
    width: 4px;
    height: 12px;
  }

  .w {
    left: -3px;
  }

  .e {
    right: -3px;
  }

  .corner {
    width: 6px;
    height: 6px;
    border: 0 solid #999;
    background: none;
  }

  .nw {
    top: -3px;
    left: -3px;
    border-width: 4px 0 0 4px;
  }

  .ne {
    top: -3px;
    right: -3px;
    border-width: 4px 4px 0 0;
  }

  .sw {
    bottom: -3px;
    left: -3px;
    border-width: 0 0 4px 4px;
  }

  .se {
    right: -3px;
    bottom: -3px;
    border-width: 0 4px 4px 0;
  }

  .page-tabs {
    display: flex;
    height: 35px;
    border-top: 2px solid #f5f5f5;
    border-bottom: 1px solid #888;
    box-sizing: content-box;
    margin-top: -1px;
  }

  .pager {
    display: flex;
    align-items: center;
    justify-content: center;
    gap: 11px;
    width: 34px;
    border-right: 1px solid #999;
  }

  .page-tab {
    width: 76px;
    padding-left: 4px;
    border-bottom: 2px solid #eac744;
    background: #fff;
    color: #666;
  }

  .add {
    display: flex;
    align-items: center;
    justify-content: center;
    width: 40px;
    background: #eac744;
  }

  /* side panels */
  .panel {
    display: flex;
    flex-direction: column;
    min-height: 0;
    border-left: 1px solid #000;
    background: #444;
    color: #fff;
  }

  .panel-head {
    display: flex;
    align-items: center;
    justify-content: space-between;
    height: 47px;
    flex: none;
    padding: 0 12px 0 11px;
    background: #212121;
  }

  .panel-head h2 {
    padding-bottom: 3px;
    font-size: 15px;
  }

  .gallery {
    display: grid;
    grid-template-columns: repeat(11, 28px);
    grid-auto-rows: 24px;
    align-content: start;
    height: 121px;
    flex: none;
    padding: 3px 0 0 4px;
  }

  .gallery button {
    display: flex;
    align-items: center;
    justify-content: center;
  }

  .gallery .active {
    width: 22px;
    height: 22px;
    margin: 1px 3px;
    outline: 2px solid #eac744;
    outline-offset: -1px;
    background: #222;
  }

  .modes {
    display: flex;
    gap: 4px;
    height: 37px;
    flex: none;
    padding-left: 12px;
    background: #212121;
  }

  .modes button {
    display: flex;
    align-items: center;
    justify-content: center;
    width: 36px;
    padding-top: 2px;
    border-bottom: 3px solid transparent;
  }

  .modes .on {
    border-color: #eac744;
  }

  .build {
    position: relative;
    flex: 1;
    min-height: 0;
    overflow: hidden;
  }

  .scroll {
    position: absolute;
    top: 0;
    right: 0;
    width: 6px;
    height: 611px;
    border-radius: 3px;
    background: #787878;
  }

  h3 {
    padding-left: 12px;
    color: #a0a0a0;
    font-size: 11px;
    line-height: 28px;
  }

  .well {
    margin-bottom: 5px;
  }

  .drop {
    margin: 0 7px 0 4px;
    padding: 2px 2px 1px;
    border: 1px dashed #666;
    border-radius: 3px;
    background: #494949;
  }

  .drop.tall {
    padding-bottom: 8px;
  }

  .drop.empty {
    padding: 0 9px;
    color: #a0a0a0;
    font-size: 10px;
    line-height: 25px;
  }

  .chip {
    display: flex;
    align-items: center;
    gap: 9px;
    height: 22px;
    padding: 0 4px;
    border: 1px solid #262626;
    border-radius: 3px;
    background: #333;
    font-size: 11px;
  }

  .chip span {
    flex: 1;
  }

  .chip button,
  .filter button {
    color: #888;
  }

  .filter-head {
    height: 36px;
    padding-left: 14px;
    background: #212121;
    font-size: 14px;
    line-height: 36px;
  }

  .filters h3 {
    color: #b8b8b8;
    line-height: 36px;
  }

  .list {
    display: flex;
    flex-direction: column;
    gap: 3px;
    padding-top: 1px;
    padding-bottom: 11px;
  }

  .filter {
    padding: 0 8px;
    border: 1px solid #262626;
    border-radius: 3px;
    background: #333;
    font-size: 11px;
    line-height: 24px;
  }

  .applied {
    padding: 2px 8px;
    line-height: 19px;
  }

  .applied div {
    display: flex;
    align-items: center;
    justify-content: space-between;
  }

  .filter button {
    margin-right: 3px;
    color: #bbb;
  }

  .hint {
    padding: 0 8px;
    color: #b8b8b8;
    font-size: 10px;
    line-height: 23px;
  }

  .search {
    display: flex;
    align-items: center;
    gap: 7px;
    height: 29px;
    margin: 7px 9px 9px 9px;
    padding-left: 11px;
    border: 1px solid #000;
    background: #212121;
  }

  .search input {
    width: 100%;
    border: none;
    outline: none;
    background: none;
    color: #fff;
    font: inherit;
    font-size: 12px;
  }

  .search input::placeholder {
    color: #aaa;
  }

  .tree {
    position: relative;
    flex: 1;
    min-height: 0;
    padding-top: 7px;
    border-top: 2px solid #3a3a3a;
    overflow: hidden;
  }

  .tree .scroll {
    top: 6px;
    width: 5px;
    height: 657px;
  }

  .table-name {
    display: flex;
    align-items: center;
    width: 100%;
    height: 24px;
    padding-left: 9px;
    font-size: 11px;
  }

  .table-name svg + svg {
    margin: 0 12px 0 9px;
  }

  .table-name.open {
    color: #eac744;
  }

  .field-list {
    margin: 3px 5px 5px 4px;
  }

  .field {
    display: flex;
    align-items: center;
    height: 20px;
    margin-bottom: 1px;
    padding-left: 28px;
    border: 1px solid #3c3c3c;
    border-width: 1px 1px 0;
    border-radius: 3px;
    background: #666;
    font-size: 11px;
    white-space: nowrap;
  }

  .field input {
    position: relative;
    width: 12px;
    height: 12px;
    margin: 0;
    appearance: none;
    border: 2px solid #c8c8c8;
    background: #fff;
  }

  .field input:checked {
    border-color: #eac744;
    background: #eac744;
  }

  .field input:checked::after {
    content: "";
    position: absolute;
    top: -1px;
    left: 2px;
    width: 3px;
    height: 6px;
    border: solid #222;
    border-width: 0 2px 2px 0;
    transform: rotate(42deg);
  }

  .sigma {
    width: 21px;
    box-sizing: border-box;
    padding-left: 5px;
    color: #aaa;
    font-size: 12px;
    font-weight: 600;
  }

  .arrows {
    position: absolute;
    top: 0;
    right: 0;
    pointer-events: none;
    filter: drop-shadow(1px 1px 1px rgba(0, 0, 0, 0.5));
  }

  .status {
    display: flex;
    align-items: center;
    justify-content: space-between;
    height: 21px;
    flex: none;
    padding: 0 4px 0 5px;
    background: #333;
    color: #fff;
    line-height: 19px;
  }

  .status a {
    font-size: 12px;
  }
</style>
